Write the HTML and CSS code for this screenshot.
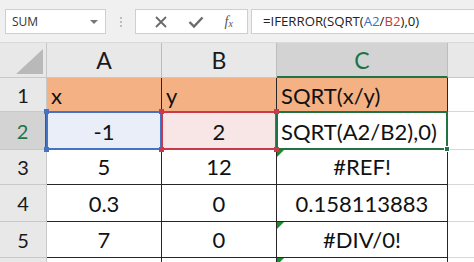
FILE: index.html
```html
<!DOCTYPE html>
<html lang="en">
<head>
  <meta charset="UTF-8">
  <title>IFERROR SQRT</title>
  <link rel="stylesheet" href="styles.css">
</head>
<body>
  <div class="toolbar">
    <div class="namebox">
      <span>SUM</span>
      <span class="caret"></span>
    </div>
    <div class="grip"><i></i><i></i><i></i></div>
    <div class="fbuttons">
      <svg width="14" height="14" viewBox="0 0 14 14"><path d="M2 2 L12 12 M12 2 L2 12" stroke="#6a6a6a" stroke-width="1.8" fill="none"/></svg>
      <svg width="16" height="14" viewBox="0 0 16 14"><path d="M1.5 7 L6 11.5 L14.5 2.5" stroke="#6a6a6a" stroke-width="2.4" fill="none"/></svg>
      <span class="fx">f<sub>x</sub></span>
    </div>
    <div class="formula">=IFERROR(SQRT(<span class="ref-a">A2</span>/<span class="ref-b">B2</span>),0)</div>
  </div>

  <div class="sheet">
    <div class="corner"></div>
    <div class="colhead">A</div>
    <div class="colhead">B</div>
    <div class="colhead active">C</div>
    <div class="colhead rest"></div>

    <div class="rowhead">1</div>
    <div class="cell head">x</div>
    <div class="cell head">y</div>
    <div class="cell head">SQRT(x/y)</div>
    <div class="cell rest"></div>

    <div class="rowhead active">2</div>
    <div class="cell center sel-a">-1<i class="h tl"></i><i class="h bl"></i></div>
    <div class="cell center sel-b">2<i class="h tl"></i><i class="h bl"></i><i class="h tr"></i><i class="h br"></i></div>
    <div class="cell sel-c">SQRT(A2/B2),0)<i class="h fill"></i></div>
    <div class="cell rest"></div>

    <div class="rowhead">3</div>
    <div class="cell center">5</div>
    <div class="cell center">12</div>
    <div class="cell center err">#REF!</div>
    <div class="cell rest"></div>

    <div class="rowhead">4</div>
    <div class="cell center">0.3</div>
    <div class="cell center">0</div>
    <div class="cell center">0.158113883</div>
    <div class="cell rest"></div>

    <div class="rowhead">5</div>
    <div class="cell center">7</div>
    <div class="cell center">0</div>
    <div class="cell center err">#DIV/0!</div>
    <div class="cell rest"></div>

    <div class="rowhead"></div>
    <div class="cell"></div>
    <div class="cell"></div>
    <div class="cell err"></div>
    <div class="cell rest"></div>
  </div>
</body>
</html>
```

FILE: styles.css
```css
* {
  box-sizing: border-box;
}

body {
  margin: 0;
  width: 474px;
  height: 262px;
  overflow: hidden;
  background: #f0f0f0;
  font-family: Lato, "Open Sans", sans-serif;
}

/* formula bar */

.toolbar {
  height: 43px;
  display: flex;
  align-items: flex-start;
  padding: 9px 0 0 5px;
  border-bottom: 1px solid #dadada;
}

.namebox {
  width: 101px;
  height: 25px;
  background: #fff;
  border: 1px solid #cfcfcf;
  display: flex;
  align-items: center;
  justify-content: space-between;
  padding: 0 7px 0 6px;
  font-family: "Open Sans", sans-serif;
  font-size: 12px;
  color: #333;
}

.caret {
  width: 0;
  height: 0;
  border-left: 4px solid transparent;
  border-right: 4px solid transparent;
  border-top: 4px solid #777;
}

.grip {
  width: 29px;
  height: 25px;
  display: flex;
  flex-direction: column;
  align-items: center;
  justify-content: center;
  gap: 2px;
}

.grip i {
  width: 2px;
  height: 2px;
  background: #bdbdbd;
}

.fbuttons {
  width: 113px;
  height: 25px;
  background: #fff;
  border: 1px solid #cfcfcf;
  display: flex;
  align-items: center;
  justify-content: space-around;
  padding: 0 4px 0 8px;
}

.fx {
  font-family: "Liberation Serif", serif;
  font-style: italic;
  font-size: 14px;
  color: #555;
}

.fx sub {
  font-size: 10px;
  vertical-align: -1px;
}

.formula {
  flex: 1;
  height: 25px;
  margin-left: 3px;
  background: #fff;
  border: 1px solid #cfcfcf;
  border-right: none;
  padding: 0 0 0 11px;
  line-height: 23px;
  font-family: "Open Sans", sans-serif;
  font-size: 13.2px;
  color: #222;
}

.ref-a {
  color: #3a6fc4;
}

.ref-b {
  color: #c0393b;
}

/* grid */

.sheet {
  display: grid;
  grid-template-columns: 47px 115px 115px 171px 1fr;
  grid-template-rows: 35px 34px 38px 35px 37px 36px 1fr;
  height: 219px;
  background: #fff;
}

.corner {
  background: #e8e8e8;
  border-right: 1px solid #c8c8c8;
  border-bottom: 1px solid #c8c8c8;
  position: relative;
}

.corner::after {
  content: "";
  position: absolute;
  right: 3px;
  bottom: 3px;
  width: 27px;
  height: 25px;
  background: #b9b9b9;
  clip-path: polygon(100% 0, 100% 100%, 0 100%);
}

.colhead {
  background: #e8e8e8;
  border-right: 1px solid #bcbcbc;
  border-bottom: 1px solid #c8c8c8;
  display: flex;
  align-items: center;
  justify-content: center;
  font-size: 23px;
  color: #1a1a1a;
}

.colhead.active {
  background: #d3d3d3;
  color: #217346;
  border-bottom: 2px solid #217346;
}

.colhead.rest {
  border-right: none;
}

.rowhead {
  background: #e8e8e8;
  border-right: 1px solid #c8c8c8;
  border-bottom: 1px solid #c8c8c8;
  display: flex;
  align-items: center;
  justify-content: center;
  font-size: 20px;
  color: #1a1a1a;
}

.rowhead.active {
  background: #d3d3d3;
  color: #217346;
  border-right: 2px solid #217346;
}

.cell {
  position: relative;
  border-right: 1px solid #262626;
  border-bottom: 1px solid #262626;
  display: flex;
  align-items: flex-end;
  padding: 0 4px 4px;
  font-size: 22px;
  color: #111;
  white-space: nowrap;
}

.cell.rest {
  border-right: none;
  border-bottom: 1px solid #d8d8d8;
}

.cell.head {
  background: #f4b184;
  padding-bottom: 2px;
}

.center {
  justify-content: center;
}

/* reference highlights */

.sel-a {
  background: #e9eef8;
}

.sel-b {
  background: #f8e6e6;
}

.sel-a::after,
.sel-b::after,
.sel-c::after {
  content: "";
  position: absolute;
  top: -1px;
  left: -1px;
  right: -1px;
  bottom: -1px;
  border: 2px solid;
}

.sel-a::after {
  border-color: #4472c4;
}

.sel-b::after {
  border-color: #c8394b;
}

.sel-c::after {
  border-color: #217346;
}

.h {
  position: absolute;
  width: 5px;
  height: 5px;
  z-index: 2;
}

.sel-a .h {
  background: #4472c4;
}

.sel-b .h {
  background: #c8394b;
}

.h.tl { top: -3px; left: -3px; }
.h.bl { bottom: -3px; left: -3px; }
.h.tr { top: -3px; right: -3px; }
.h.br { bottom: -3px; right: -3px; }

.h.fill {
  background: #217346;
  right: -3px;
  bottom: -3px;
  border: 1px solid #fff;
  width: 6px;
  height: 6px;
}

.err::before {
  content: "";
  position: absolute;
  top: 0;
  left: 0;
  width: 7px;
  height: 7px;
  background: #1e8a2c;
  clip-path: polygon(0 0, 100% 0, 0 100%);
}
```
